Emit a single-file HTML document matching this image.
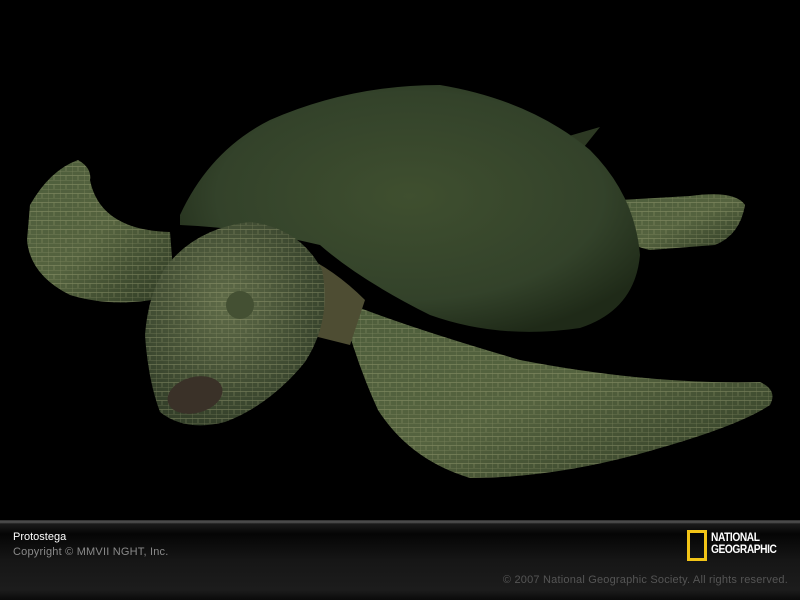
<!DOCTYPE html>
<html><head><meta charset="utf-8"><style>
html,body{margin:0;padding:0;background:#000;width:800px;height:600px;overflow:hidden;font-family:"Liberation Sans",sans-serif}
.bar{position:absolute;left:0;top:520px;width:800px;height:80px;background:linear-gradient(#2a2a2a 0,#555 2px,#1a1a1a 4px,#050505 14px,#161616 40px,#1c1c1c 70px,#0a0a0a 80px)}
.t1{position:absolute;left:13px;top:531px;font-size:11px;color:#fff}
.t2{position:absolute;left:13px;top:546px;font-size:11px;color:#8a8a8a;letter-spacing:0.2px}
.t3{position:absolute;right:12px;top:574px;font-size:11px;color:#555;letter-spacing:0.2px}
.logo{position:absolute;left:687px;top:530px;width:14px;height:25px;border:3px solid #f2c417}
.lt{position:absolute;left:711px;top:531px;font-size:12px;line-height:12px;color:#fff;font-weight:bold;letter-spacing:-0.5px;transform:scaleX(0.85);transform-origin:left}
</style></head><body>
<svg width="800" height="520" style="position:absolute;left:0;top:0">
<defs>
<radialGradient id="sh" cx="0.5" cy="0.45" r="0.6"><stop offset="0" stop-color="#3f4f2f"/><stop offset="0.7" stop-color="#33422a"/><stop offset="1" stop-color="#1f2a18"/></radialGradient>
<linearGradient id="fl" x1="0" y1="0" x2="1" y2="1"><stop offset="0" stop-color="#4e5e3c"/><stop offset="0.5" stop-color="#55633f"/><stop offset="1" stop-color="#2e3a24"/></linearGradient>
<radialGradient id="hd" cx="0.45" cy="0.4" r="0.6"><stop offset="0" stop-color="#5f6b48"/><stop offset="1" stop-color="#34402a"/></radialGradient>
<pattern id="sc" width="12" height="9" patternUnits="userSpaceOnUse"><path d="M0 0H12M0 0V9M6 4.5V9M0 4.5H12" stroke="#b7b98a" stroke-width="0.7" opacity="0.4" fill="none"/></pattern>
</defs>
<path d="M555 140 L600 127 L580 152 Z" fill="#2d3923"/>
<path d="M30 205 Q50 170 78 160 Q92 168 90 180 Q100 230 170 232 L175 295 Q120 310 70 295 Q30 275 27 240 Z" fill="url(#fl)"/>
<path d="M30 205 Q50 170 78 160 Q92 168 90 180 Q100 230 170 232 L175 295 Q120 310 70 295 Q30 275 27 240 Z" fill="url(#sc)"/>
<path d="M620 200 L690 196 Q735 190 745 205 Q740 235 715 245 L650 250 Q625 245 620 230 Z" fill="url(#fl)"/>
<path d="M620 200 L690 196 Q735 190 745 205 Q740 235 715 245 L650 250 Q625 245 620 230 Z" fill="url(#sc)"/>
<path d="M180 215 Q210 150 270 120 Q350 85 440 85 Q530 100 590 150 Q635 195 640 255 Q635 310 580 328 Q500 340 430 315 Q360 280 320 245 Q250 228 180 225 Z" fill="url(#sh)"/>
<path d="M340 300 Q400 325 520 360 Q650 385 760 382 Q778 390 770 405 Q740 425 660 448 Q560 478 470 478 Q410 460 378 410 Q355 360 340 300 Z" fill="url(#fl)"/>
<path d="M340 300 Q400 325 520 360 Q650 385 760 382 Q778 390 770 405 Q740 425 660 448 Q560 478 470 478 Q410 460 378 410 Q355 360 340 300 Z" fill="url(#sc)"/>
<path d="M290 250 Q330 265 365 300 L350 345 L310 335 Z" fill="#4e4d33"/>
<path d="M165 268 Q195 228 250 222 Q300 228 322 270 Q332 320 305 362 Q270 405 225 422 Q185 432 160 412 Q148 380 145 335 Q148 295 165 268 Z" fill="url(#hd)"/>
<path d="M165 268 Q195 228 250 222 Q300 228 322 270 Q332 320 305 362 Q270 405 225 422 Q185 432 160 412 Q148 380 145 335 Q148 295 165 268 Z" fill="url(#sc)"/>
<ellipse cx="195" cy="395" rx="28" ry="18" fill="#3a3128" transform="rotate(-15 195 395)"/>
<circle cx="240" cy="305" r="14" fill="#445033"/>
</svg>
<div class="bar"></div>
<div class="t1">Protostega</div>
<div class="t2">Copyright © MMVII NGHT, Inc.</div>
<div class="logo"></div>
<div class="lt">NATIONAL<br>GEOGRAPHIC</div>
<div class="t3">© 2007 National Geographic Society. All rights reserved.</div>
</body></html>
